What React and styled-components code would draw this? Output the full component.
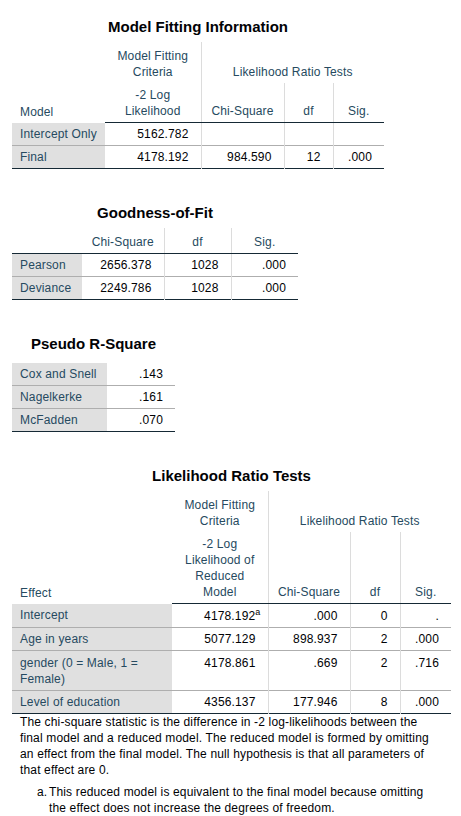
import React from "react"
import styled, { createGlobalStyle } from "styled-components"

const GlobalStyle = createGlobalStyle`
  body {
    margin: 0;
    background: #ffffff;
    font-family: "Liberation Sans", Arial, sans-serif;
  }
`

const ink = "#010205"
const slate = "#264a60"
const heavy = "#152935"
const rule = "#aeaeae"
const faint = "#dcdcdc"
const shade = "#e0e0e0"

const modelFitting = [
  { label: "Intercept Only", ll: "5162.782", chi: "", df: "", sig: "" },
  { label: "Final", ll: "4178.192", chi: "984.590", df: "12", sig: ".000" },
]

const goodness = [
  { label: "Pearson", chi: "2656.378", df: "1028", sig: ".000" },
  { label: "Deviance", chi: "2249.786", df: "1028", sig: ".000" },
]

const pseudo = [
  { label: "Cox and Snell", value: ".143" },
  { label: "Nagelkerke", value: ".161" },
  { label: "McFadden", value: ".070" },
]

const ratioTests = [
  { label: "Intercept", ll: "4178.192", note: "a", chi: ".000", df: "0", sig: "." },
  { label: "Age in years", ll: "5077.129", chi: "898.937", df: "2", sig: ".000" },
  { label: "gender (0 = Male, 1 = Female)", ll: "4178.861", chi: ".669", df: "2", sig: ".716" },
  { label: "Level of education", ll: "4356.137", chi: "177.946", df: "8", sig: ".000" },
]

const App = () => {
  return (
    <Page>
      <GlobalStyle />

      <Section>
        <Table $width={372}>
          <Caption $gap={6}>Model Fitting Information</Caption>
          <colgroup>
            <col width='93' />
            <col width='96' />
            <col width='83' />
            <col width='49' />
            <col width='51' />
          </colgroup>
          <thead>
            <tr>
              <Th rowSpan={2} $left>Model</Th>
              <Th>Model Fitting<br />Criteria</Th>
              <Th colSpan={3} $divider>Likelihood Ratio Tests</Th>
            </tr>
            <tr>
              <Th>-2 Log<br />Likelihood</Th>
              <Th $divider>Chi-Square</Th>
              <Th $divider>df</Th>
              <Th $divider>Sig.</Th>
            </tr>
          </thead>
          <tbody>
            {modelFitting.map((row) => (
              <Row key={row.label}>
                <RowHead>{row.label}</RowHead>
                <Cell>{row.ll}</Cell>
                <Cell $divider>{row.chi}</Cell>
                <Cell $divider>{row.df}</Cell>
                <Cell $divider>{row.sig}</Cell>
              </Row>
            ))}
          </tbody>
        </Table>
      </Section>

      <Section $spaced>
        <Table $width={286}>
          <Caption $gap={6}>Goodness-of-Fit</Caption>
          <colgroup>
            <col width='70' />
            <col width='82' />
            <col width='67' />
            <col width='67' />
          </colgroup>
          <thead>
            <tr>
              <Th $left></Th>
              <Th>Chi-Square</Th>
              <Th $divider>df</Th>
              <Th $divider>Sig.</Th>
            </tr>
          </thead>
          <tbody>
            {goodness.map((row) => (
              <Row key={row.label}>
                <RowHead>{row.label}</RowHead>
                <Cell>{row.chi}</Cell>
                <Cell $divider>{row.df}</Cell>
                <Cell $divider>{row.sig}</Cell>
              </Row>
            ))}
          </tbody>
        </Table>
      </Section>

      <Section $spaced>
        <Table $width={163}>
          <Caption $gap={10}>Pseudo R-Square</Caption>
          <colgroup>
            <col width='95' />
            <col width='68' />
          </colgroup>
          <tbody>
            {pseudo.map((row) => (
              <Row key={row.label}>
                <RowHead>{row.label}</RowHead>
                <Cell>{row.value}</Cell>
              </Row>
            ))}
          </tbody>
        </Table>
      </Section>

      <Section $spaced>
        <Table $width={439} $tall>
          <Caption $gap={6}>Likelihood Ratio Tests</Caption>
          <colgroup>
            <col width='160' />
            <col width='96' />
            <col width='82' />
            <col width='50' />
            <col width='51' />
          </colgroup>
          <thead>
            <tr>
              <Th rowSpan={2} $left>Effect</Th>
              <Th>Model Fitting<br />Criteria</Th>
              <Th colSpan={3} $divider>Likelihood Ratio Tests</Th>
            </tr>
            <tr>
              <Th>-2 Log<br />Likelihood of<br />Reduced<br />Model</Th>
              <Th $divider>Chi-Square</Th>
              <Th $divider>df</Th>
              <Th $divider>Sig.</Th>
            </tr>
          </thead>
          <tbody>
            {ratioTests.map((row) => (
              <Row key={row.label}>
                <RowHead>{row.label}</RowHead>
                <Cell>
                  {row.ll}
                  {row.note && <Note>{row.note}</Note>}
                </Cell>
                <Cell $divider>{row.chi}</Cell>
                <Cell $divider>{row.df}</Cell>
                <Cell $divider>{row.sig}</Cell>
              </Row>
            ))}
          </tbody>
        </Table>
        <Footnote>
          The chi-square statistic is the difference in -2 log-likelihoods between the<br />
          final model and a reduced model. The reduced model is formed by omitting<br />
          an effect from the final model. The null hypothesis is that all parameters of<br />
          that effect are 0.
        </Footnote>
        <Remark>
          <Marker>a.</Marker>
          <span>
            This reduced model is equivalent to the final model because omitting<br />
            the effect does not increase the degrees of freedom.
          </span>
        </Remark>
      </Section>
    </Page>
  )
}

// Styles
const Page = styled.div`
  padding: 18px 10px 20px 12px;
  color: ${ink};
  font-size: 12px;
  line-height: 16px;
  letter-spacing: 0.15px;
`

const Section = styled.section`
  margin-top: ${(p) => (p.$spaced ? "35px" : "0")};
`

const Table = styled.table`
  width: ${(p) => p.$width}px;
  table-layout: fixed;
  border-collapse: collapse;
  border-spacing: 0;

  tbody td {
    padding-top: ${(p) => (p.$tall ? "3.5px" : "3px")};
  }
`

const Caption = styled.caption`
  padding-bottom: ${(p) => p.$gap}px;
  font-size: 15px;
  line-height: 18px;
  font-weight: bold;
  letter-spacing: 0;
  color: ${ink};
  text-align: center;
`

const Th = styled.th`
  padding: 4px 6px 3px ${(p) => (p.$left ? "8px" : "6px")};
  font-weight: normal;
  color: ${slate};
  text-align: ${(p) => (p.$left ? "left" : "center")};
  vertical-align: bottom;
  border-left: ${(p) => (p.$divider ? `1px solid ${faint}` : "none")};

  tr:first-child > & {
    padding-top: 6px;
  }
  tr:last-child > & {
    border-bottom: 1px solid ${heavy};
  }
`

const Row = styled.tr`
  border-bottom: 1px solid ${rule};
  &:last-child {
    border-bottom: 1px solid ${heavy};
  }
`

const RowHead = styled.td`
  padding: 3px 6px 3px 8px;
  background: ${shade};
  color: ${slate};
  text-align: left;
  vertical-align: top;
`

const Cell = styled.td`
  padding: 3px 12px 3px 6px;
  color: ${ink};
  text-align: right;
  vertical-align: top;
  white-space: nowrap;
  border-left: ${(p) => (p.$divider ? `1px solid ${faint}` : "none")};
`

const Note = styled.sup`
  margin-right: -5px;
  font-size: 9px;
  line-height: 0;
  vertical-align: 5px;
`

const Footnote = styled.p`
  margin: 0;
  padding-left: 8px;
  color: ${ink};
  white-space: nowrap;
`

const Remark = styled.div`
  display: flex;
  margin-top: 6px;
  padding-left: 25px;
  color: ${ink};
  white-space: nowrap;
`

const Marker = styled.span`
  flex: 0 0 12px;
`

export default App
